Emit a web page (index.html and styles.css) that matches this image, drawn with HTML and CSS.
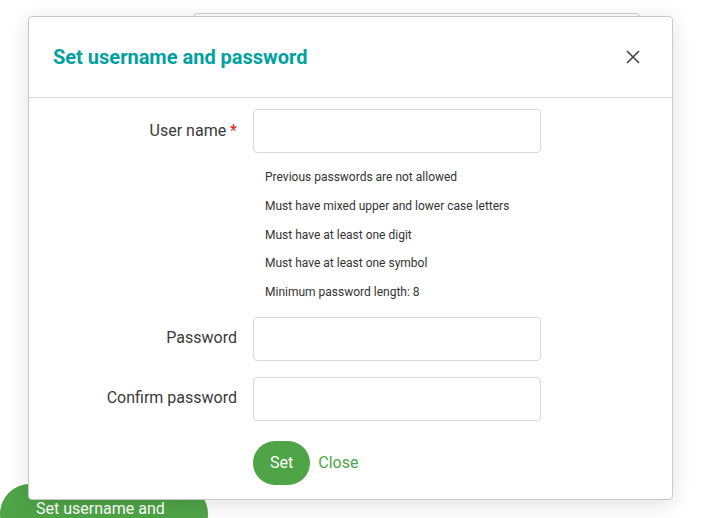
FILE: index.html
```html
<!DOCTYPE html>
<html>
<head>
<meta charset="utf-8">
<link rel="stylesheet" href="styles.css">
</head>
<body>
<div class="page">
  <div class="bg-card"></div>
  <button class="bg-button">Set username and password</button>
</div>

<div class="modal" role="dialog">
  <div class="modal-header">
    <h2 class="modal-title">Set username and password</h2>
    <button class="modal-close" aria-label="Close">
      <svg width="14" height="14" viewBox="0 0 14 14"><path d="M1 1L13 13M13 1L1 13" stroke="#444" stroke-width="1.6" fill="none"/></svg>
    </button>
  </div>
  <form class="modal-body">
    <label class="form-label">User name <span class="req">*</span></label>
    <input class="form-input" type="text">

    <ul class="rules">
      <li>Previous passwords are not allowed</li>
      <li>Must have mixed upper and lower case letters</li>
      <li>Must have at least one digit</li>
      <li>Must have at least one symbol</li>
      <li>Minimum password length: 8</li>
    </ul>

    <label class="form-label">Password</label>
    <input class="form-input" type="password">

    <label class="form-label">Confirm password</label>
    <input class="form-input" type="password">

    <div class="actions">
      <button type="button" class="btn-set">Set</button>
      <a class="link-close" href="#">Close</a>
    </div>
  </form>
</div>
</body>
</html>
```

FILE: styles.css
```css
html, body {
  margin: 0;
  padding: 0;
  background: #ffffff;
  font-family: Roboto, "Liberation Sans", sans-serif;
  overflow: hidden;
  height: 518px;
}

.page {
  display: flex;
  flex-direction: column;
  align-items: flex-start;
}

.bg-card {
  margin: 13px 0 0 193px;
  width: 445px;
  height: 468px;
  border: 1px solid #cfcfcf;
  border-radius: 4px;
  background: #fff;
}

.bg-button {
  margin-top: 1px;
  width: 208px;
  height: 60px;
  border: none;
  border-radius: 30px;
  background: #4ea446;
  color: #fff;
  font-family: Roboto, "Liberation Sans", sans-serif;
  font-size: 16px;
  line-height: 20px;
  text-align: left;
  padding: 9px 20px 0 36px;
  display: block;
}

.modal {
  position: absolute;
  left: 28px;
  top: 16px;
  width: 643px;
  height: 482px;
  background: #fff;
  border: 1px solid #c9c9c9;
  border-radius: 4px;
  box-shadow: 0 4px 22px rgba(0, 0, 0, 0.12);
}

.modal-header {
  height: 80px;
  border-bottom: 1px solid #d6d6d6;
  display: flex;
  align-items: center;
  justify-content: space-between;
  padding: 0 32px 0 24px;
}

.modal-title {
  margin: 0;
  font-size: 20px;
  font-weight: 700;
  color: #00a19e;
}

.modal-close {
  border: none;
  background: none;
  padding: 0;
  width: 14px;
  height: 14px;
  display: flex;
}

.modal-body {
  display: grid;
  grid-template-columns: 184px 288px;
  column-gap: 16px;
  padding: 11px 0 0 24px;
  align-items: center;
}

.form-label {
  text-align: right;
  font-size: 16px;
  color: #3a3a3a;
  margin-bottom: 18px;
}

.req {
  color: #e02020;
}

.form-input {
  box-sizing: border-box;
  width: 288px;
  height: 44px;
  border: 1px solid #d9d9d9;
  border-radius: 4px;
  margin: 0 0 16px;
  background: #fff;
}

.rules {
  grid-column: 2;
  list-style: none;
  margin: -6px 0 10px;
  padding: 0 0 0 12px;
  font-size: 12px;
  color: #333;
}

.rules li {
  line-height: 28.75px;
}

.actions {
  grid-column: 2;
  display: flex;
  align-items: center;
  gap: 8px;
  margin-top: 4px;
}

.btn-set {
  height: 44px;
  padding: 0 17px;
  border: none;
  border-radius: 22px;
  background: #4ea446;
  color: #fff;
  font-family: Roboto, "Liberation Sans", sans-serif;
  font-size: 16px;
}

.link-close {
  color: #4ea446;
  font-size: 16px;
  text-decoration: none;
}
```
